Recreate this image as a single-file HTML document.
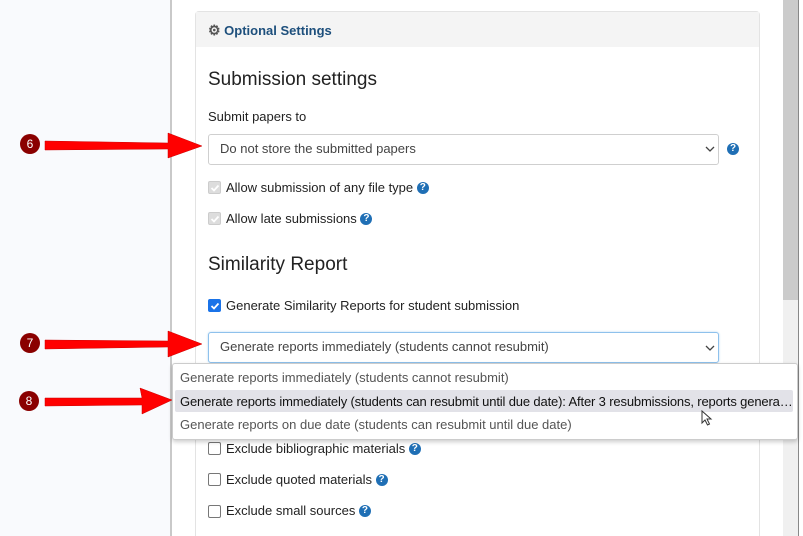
<!DOCTYPE html>
<html><head><style>
*{box-sizing:border-box;margin:0;padding:0}
html,body{width:803px;height:536px;overflow:hidden}
body{background:#f9fafd;font-family:"Liberation Sans",Arial,sans-serif;position:relative;color:#222}
.abs{position:absolute;white-space:nowrap}
.modal{left:170px;top:0;width:613px;height:536px;background:#fff;border-left:2px solid #c9c9c9}
.card{left:195px;top:11px;width:565px;height:525px;border:1px solid #e3e3e3;border-bottom:none;border-radius:4px 4px 0 0;background:#fff}
.cardh{left:196px;top:12px;width:563px;height:35px;background:#f4f4f4}
.t13{font-size:13px;color:#222;line-height:15px}
.h{font-size:19px;color:#222}
.sel{border:1px solid #cfcfcf;border-radius:3px;background:#fff;font-size:13px;color:#444;padding-left:11px;line-height:28px}
.cb{width:13px;height:13px;border:1px solid #777;border-radius:2px;background:#fff}
.help{display:inline-block;position:relative;top:-1px;vertical-align:middle;width:12px;height:12px;border-radius:50%;background:#1f6fb5;color:#fff;font-size:10px;font-weight:bold;text-align:center;line-height:12px}
.circ{width:20px;height:20px;border-radius:50%;background:#8a0000;color:#fff;font-size:12px;text-align:center;line-height:20px}
</style></head><body>
<div class="abs modal"></div>
<div class="abs card"></div>
<div class="abs cardh"></div>
<div class="abs" style="left:208px;top:22px;font-size:13px;font-weight:bold;color:#1d4f7c"><span style="color:#555;font-size:14px">⚙</span> Optional Settings</div>
<div class="abs h" style="left:208px;top:69px">Submission settings</div>
<div class="abs t13" style="left:208px;top:109px">Submit papers to</div>
<div class="abs sel" style="left:208px;top:134px;width:511px;height:31px">Do not store the submitted papers</div>
<svg class="abs" style="left:705px;top:145px" width="10" height="8"><path d="M1 2 L5 6 L9 2" stroke="#444" stroke-width="1.3" fill="none"/></svg>
<div class="help" style="position:absolute;left:727px;top:143px">?</div>
<div class="abs cb" style="left:208px;top:181px;background:#ddd;border-color:#ccc"></div>
<svg class="abs" style="left:209px;top:182px" width="12" height="12"><path d="M2.5 6 L5 8.5 L9.5 3.5" stroke="#fff" stroke-width="1.8" fill="none"/></svg>
<div class="abs t13" style="left:226px;top:180px">Allow submission of any file type <span class="help">?</span></div>
<div class="abs cb" style="left:208px;top:212px;background:#ddd;border-color:#ccc"></div>
<svg class="abs" style="left:209px;top:213px" width="12" height="12"><path d="M2.5 6 L5 8.5 L9.5 3.5" stroke="#fff" stroke-width="1.8" fill="none"/></svg>
<div class="abs t13" style="left:226px;top:211px">Allow late submissions <span class="help">?</span></div>
<div class="abs h" style="left:208px;top:254px">Similarity Report</div>
<div class="abs cb" style="left:208px;top:299px;background:#1a73e8;border-color:#1a73e8"></div>
<svg class="abs" style="left:209px;top:300px" width="12" height="12"><path d="M2.5 6 L5 8.5 L9.5 3.5" stroke="#fff" stroke-width="1.8" fill="none"/></svg>
<div class="abs t13" style="left:226px;top:298px">Generate Similarity Reports for student submission</div>
<div class="abs sel" style="left:208px;top:332px;width:511px;height:31px;border-color:#8ec1ec;box-shadow:0 0 2px #b9d8f3">Generate reports immediately (students cannot resubmit)</div>
<svg class="abs" style="left:705px;top:344px" width="10" height="8"><path d="M1 2 L5 6 L9 2" stroke="#444" stroke-width="1.3" fill="none"/></svg>
<div class="abs cb" style="left:208px;top:442px"></div>
<div class="abs t13" style="left:226px;top:441px">Exclude bibliographic materials <span class="help">?</span></div>
<div class="abs cb" style="left:208px;top:473px"></div>
<div class="abs t13" style="left:226px;top:472px">Exclude quoted materials <span class="help">?</span></div>
<div class="abs cb" style="left:208px;top:505px"></div>
<div class="abs t13" style="left:226px;top:503px">Exclude small sources <span class="help">?</span></div>
<div class="abs" style="left:783px;top:0;width:15px;height:300px;background:#cbcbcb"></div>
<div class="abs" style="left:783px;top:300px;width:15px;height:236px;background:#f0f0f0"></div>
<div class="abs" style="left:798px;top:0;width:5px;height:536px;background:#fff;border-left:1px solid #888"></div>
<div class="abs" style="left:172px;top:363px;width:626px;height:77px;background:#fff;border:1px solid #ccc;border-radius:3px;box-shadow:0 2px 4px rgba(0,0,0,.2)"></div>
<div class="abs" style="left:175px;top:390px;width:618px;height:22px;background:#e2e2e8;border-radius:2px"></div>
<div class="abs t13" style="left:180px;top:370px;color:#555">Generate reports immediately (students cannot resubmit)</div>
<div class="abs t13" style="left:180px;top:394px;color:#111;letter-spacing:-0.15px">Generate reports immediately (students can resubmit until due date): After 3 resubmissions, reports genera…</div>
<div class="abs t13" style="left:180px;top:417px;color:#555">Generate reports on due date (students can resubmit until due date)</div>
<svg class="abs" style="left:701px;top:410px" width="12" height="16"><path d="M1 1 L1 13 L4 10 L6.5 15 L8.5 14 L6 9 L10 9 Z" fill="#fff" stroke="#333" stroke-width="1"/></svg>
<div class="abs circ" style="left:20px;top:134px">6</div>
<div class="abs circ" style="left:20px;top:333px">7</div>
<div class="abs circ" style="left:19px;top:391px">8</div>
<svg class="abs" style="left:0;top:0" width="240" height="430">
<g fill="#f00" stroke="#c00" stroke-width="0.5">
<path d="M45 141 L168 143 L168 133 L202 146 L168 158 L168 149 L45 150 Z"/>
<path d="M45 340 L168 341 L168 331 L202 344 L168 357 L168 347 L45 349 Z"/>
<path d="M45 398 L142 398 L140 388 L172 400 L142 414 L142 405 L45 406 Z"/>
</g></svg>
</body></html>
